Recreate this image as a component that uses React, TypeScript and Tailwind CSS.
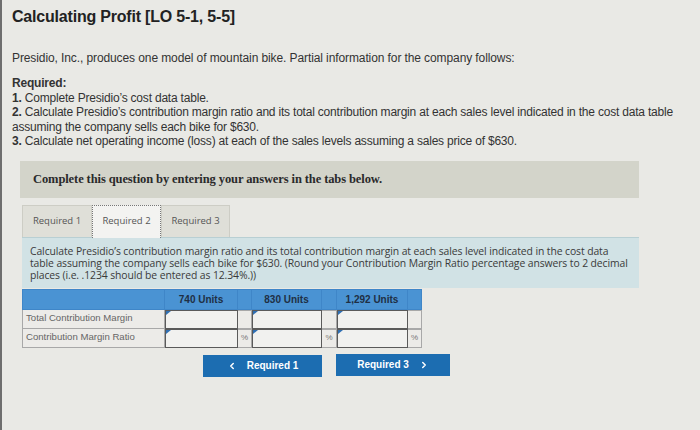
import React from "react"
import { ChevronLeft, ChevronRight } from "lucide-react"

const sans = { fontFamily: '"Liberation Sans", Arial, sans-serif' }
const condensed = { fontFamily: '"Open Sans", "Liberation Sans", sans-serif' }
const serif = { fontFamily: '"Liberation Serif", "DejaVu Serif", serif' }

const InputCell: React.FC = () => (
  <div className="relative h-full border border-[#5a5a5a] bg-[#f1f1ef]">
    <span className="absolute left-0 top-0 h-0 w-0 border-l-[5px] border-b-[4px] border-l-[#2f6fb3] border-b-transparent" />
  </div>
)

const Pct: React.FC<{ show?: boolean }> = ({ show }) => (
  <div className="flex h-full items-center justify-center border-y border-r border-[#a8a8a8] bg-[#ecebe8] text-[8px] text-[#777]">
    {show ? "%" : ""}
  </div>
)

export default function App() {
  return (
    <div
      className="h-[430px] w-[700px] overflow-hidden border-l-2 border-[#6e6e6e] bg-[#e9e9e5] text-[#2b2b2b]"
      style={sans}
    >
      <div className="pl-[10px] pt-[7px]">
        <h1 className="text-[16px] font-bold leading-[20px] tracking-[-0.2px] text-[#222]">
          Calculating Profit [LO 5-1, 5-5]
        </h1>

        <p className="mt-[24px] text-[12px] leading-[15px] tracking-[-0.1px] text-[#333]">
          Presidio, Inc., produces one model of mountain bike. Partial information for the company follows:
        </p>

        <div className="mt-[10px] text-[12px] leading-[14.5px] tracking-[-0.2px] text-[#333]">
          <p className="font-bold">Required:</p>
          <p>
            <b>1.</b> Complete Presidio’s cost data table.
          </p>
          <p className="pr-[14px]">
            <b>2.</b> Calculate Presidio’s contribution margin ratio and its total contribution margin at each sales level indicated in the cost data table assuming the company sells each bike for $630.
          </p>
          <p>
            <b>3.</b> Calculate net operating income (loss) at each of the sales levels assuming a sales price of $630.
          </p>
        </div>
      </div>

      <div className="ml-[18px] mt-[12px] w-[619px]">
        <div className="flex h-[37px] items-center bg-[#d3d4ca] pl-[13px]">
          <span className="text-[12.5px] font-bold tracking-[-0.1px] text-[#2a2a2a]" style={serif}>
            Complete this question by entering your answers in the tabs below.
          </span>
        </div>

        <div className="mt-[7px] pl-[2px]">
          <div className="flex h-[32px] items-stretch text-[9.5px] text-[#555]" style={condensed}>
            <div className="flex w-[70px] items-center justify-center border border-b-0 border-[#cdcdc5] bg-[#dfdfd8]">
              Required 1
            </div>
            <div className="relative z-10 -mb-px flex w-[69px] items-center justify-center border border-b-0 border-dotted border-[#777] bg-[#f3f3f1]">
              Required 2
            </div>
            <div className="flex w-[69px] items-center justify-center border border-b-0 border-[#cdcdc5] bg-[#dfdfd8]">
              Required 3
            </div>
          </div>

          <div
            className="h-[51px] w-[617px] border-t border-[#b8cfd3] bg-[#d1e2e5] px-[8px] pt-[7px] text-[10.4px] leading-[12px] tracking-[-0.1px] text-[#3a3a3a]"
            style={condensed}
          >
            Calculate Presidio’s contribution margin ratio and its total contribution margin at each sales level indicated in the cost data table assuming the company sells each bike for $630. (Round your Contribution Margin Ratio percentage answers to 2 decimal places (i.e. .1234 should be entered as 12.34%.))
          </div>

          <div className="mt-px grid w-[400px] grid-cols-[143px_73px_14px_70px_15px_71px_14px] grid-rows-[21px_19px_19px] text-[9.6px]">
            <div className="border border-[#3f86c8] bg-[#4a93d3]" />
            <div className="flex items-center justify-center border-y border-r border-[#3f86c8] bg-[#4a93d3] text-[10px] font-bold text-[#1f2f44]">740 Units</div>
            <div className="border-y border-r border-[#3f86c8] bg-[#4a93d3]" />
            <div className="flex items-center justify-center border-y border-r border-[#3f86c8] bg-[#4a93d3] text-[10px] font-bold text-[#1f2f44]">830 Units</div>
            <div className="border-y border-r border-[#3f86c8] bg-[#4a93d3]" />
            <div className="flex items-center justify-center border-y border-r border-[#3f86c8] bg-[#4a93d3] text-[10px] font-bold text-[#1f2f44]">1,292 Units</div>
            <div className="border-y border-r border-[#3f86c8] bg-[#4a93d3]" />

            <div className="flex items-center border-x border-b border-[#a8a8a8] bg-[#ecebe8] pl-[3px] text-[#666]">Total Contribution Margin</div>
            <InputCell />
            <Pct />
            <InputCell />
            <Pct />
            <InputCell />
            <Pct />

            <div className="flex items-center border-x border-b border-[#a8a8a8] bg-[#ecebe8] pl-[3px] text-[#666]">Contribution Margin Ratio</div>
            <InputCell />
            <Pct show />
            <InputCell />
            <Pct show />
            <InputCell />
            <Pct show />
          </div>

          <div className="ml-[181px] mt-[7px] flex gap-[14px] text-[10px] font-bold text-white">
            <div className="flex h-[22px] w-[119px] items-center justify-center gap-[10px] bg-[#1c6db1]">
              <ChevronLeft size={10} strokeWidth={3.5} />
              <span>Required 1</span>
            </div>
            <div className="-mt-px flex h-[22px] w-[114px] items-center justify-center gap-[10px] bg-[#1c6db1]">
              <span>Required 3</span>
              <ChevronRight size={10} strokeWidth={3.5} />
            </div>
          </div>
        </div>
      </div>
    </div>
  )
}
